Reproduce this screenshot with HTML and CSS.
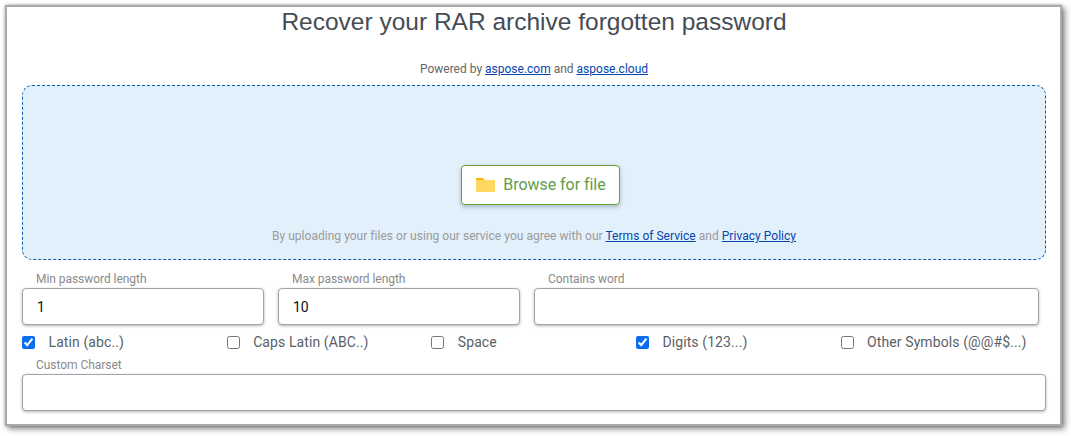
FILE: index.html
```html
<!DOCTYPE html>
<html lang="en">
<head>
<meta charset="utf-8">
<title>Recover RAR password</title>
<link rel="stylesheet" href="styles.css">
</head>
<body>
<main class="frame">
  <h1 class="title">Recover your RAR archive forgotten password</h1>
  <p class="powered">Powered by <a href="#">aspose.com</a> and <a href="#">aspose.cloud</a></p>
  <section class="drop">
    <button class="browse" type="button">
      <svg class="folder" width="19" height="14" viewBox="0 0 20 14" preserveAspectRatio="none" aria-hidden="true">
        <path d="M0 1a1 1 0 0 1 1-1h6l2 2h10a1 1 0 0 1 1 1v1H0z" fill="#ffb300"/>
        <path d="M0 2h20v11a1 1 0 0 1-1 1H1a1 1 0 0 1-1-1z" fill="#ffd761"/>
      </svg>
      <span>Browse for file</span>
    </button>
    <p class="terms">By uploading your files or using our service you agree with our <a href="#">Terms of Service</a> and <a href="#">Privacy Policy</a></p>
  </section>
  <div class="fields">
    <label class="field"><span class="lbl">Min password length</span><input class="inp" type="text" value="1"></label>
    <label class="field"><span class="lbl">Max password length</span><input class="inp" type="text" value="10"></label>
    <label class="field"><span class="lbl">Contains word</span><input class="inp" type="text"></label>
  </div>
  <div class="checks">
    <label class="chk"><input type="checkbox" checked><span>Latin (abc..)</span></label>
    <label class="chk"><input type="checkbox"><span>Caps Latin (ABC..)</span></label>
    <label class="chk"><input type="checkbox"><span>Space</span></label>
    <label class="chk"><input type="checkbox" checked><span>Digits (123...)</span></label>
    <label class="chk"><input type="checkbox"><span>Other Symbols (@@#$...)</span></label>
  </div>
  <label class="field"><span class="lbl">Custom Charset</span><input class="inp" type="text"></label>
</main>
</body>
</html>
```
FILE: styles.css
```css
* { box-sizing: border-box; }
html, body { margin: 0; height: 436px; background: #fff; }
body { padding: 5px 0 0 5px; font-family: Roboto, "Liberation Sans", sans-serif; overflow: hidden; }
.frame {
  width: 1057px;
  height: 421px;
  border: 2px solid #aaa;
  box-shadow: 3px 3px 6px rgba(0,0,0,.45), 0 0 3px rgba(0,0,0,.3);
  padding: 0 14px 0 15px;
  background: #fff;
}
.title {
  margin: 0;
  height: 52px;
  font: 400 24.5px/30px "Liberation Sans", Arial, sans-serif;
  color: #454c54;
  text-align: center;
}
.powered {
  margin: 0;
  height: 26px;
  padding-top: 3px;
  font-size: 12px;
  line-height: 15px;
  color: #666;
  text-align: center;
}
a { color: #0645ad; }
.drop {
  height: 175px;
  border: 1px dashed #0b5cb5;
  border-radius: 10px;
  background: #e2f0fc;
  display: flex;
  flex-direction: column;
  align-items: center;
  padding-top: 79px;
}
.browse {
  width: 159px;
  height: 40px;
  margin-left: 13px;
  display: flex;
  align-items: center;
  justify-content: center;
  gap: 8px;
  padding: 0 0 2px 1px;
  background: #fff;
  border: 1px solid #69a03c;
  border-radius: 4px;
  box-shadow: 0 2px 4px rgba(60,80,100,.35);
  font: 400 16px Roboto, sans-serif;
  letter-spacing: -.05px;
  color: #629c4c;
}
.folder { flex: none; margin-top: 2px; }
.terms {
  margin: 0;
  padding-top: 24px;
  font-size: 12px;
  line-height: 15px;
  letter-spacing: .03px;
  color: #9a9a9a;
}
.fields {
  display: grid;
  grid-template-columns: 242px 242px 505px;
  gap: 14px;
  margin-top: 11px;
}
.field { display: block; }
.lbl {
  display: block;
  height: 17px;
  padding: 1px 0 0 14px;
  font-size: 12px;
  line-height: 15px;
  letter-spacing: -.05px;
  color: #8a8a8a;
}
.inp {
  display: block;
  width: 100%;
  height: 37px;
  padding: 0 14px;
  border: 1px solid #a3a3a8;
  border-radius: 4px;
  box-shadow: 0 1px 3px rgba(0,0,0,.3);
  background: #fff;
  font: 400 14px Roboto, sans-serif;
  color: #111;
  outline: none;
}
.checks {
  display: grid;
  grid-template-columns: repeat(5, 204.65px);
  height: 30px;
  align-items: center;
  margin-top: 2px;
}
.chk {
  display: flex;
  align-items: center;
  gap: 13.5px;
  font-size: 14px;
  letter-spacing: .1px;
  color: #5a5f66;
  white-space: nowrap;
}
.chk input {
  width: 13px;
  height: 13px;
  margin: 0;
  accent-color: #0b6cf0;
}
```
